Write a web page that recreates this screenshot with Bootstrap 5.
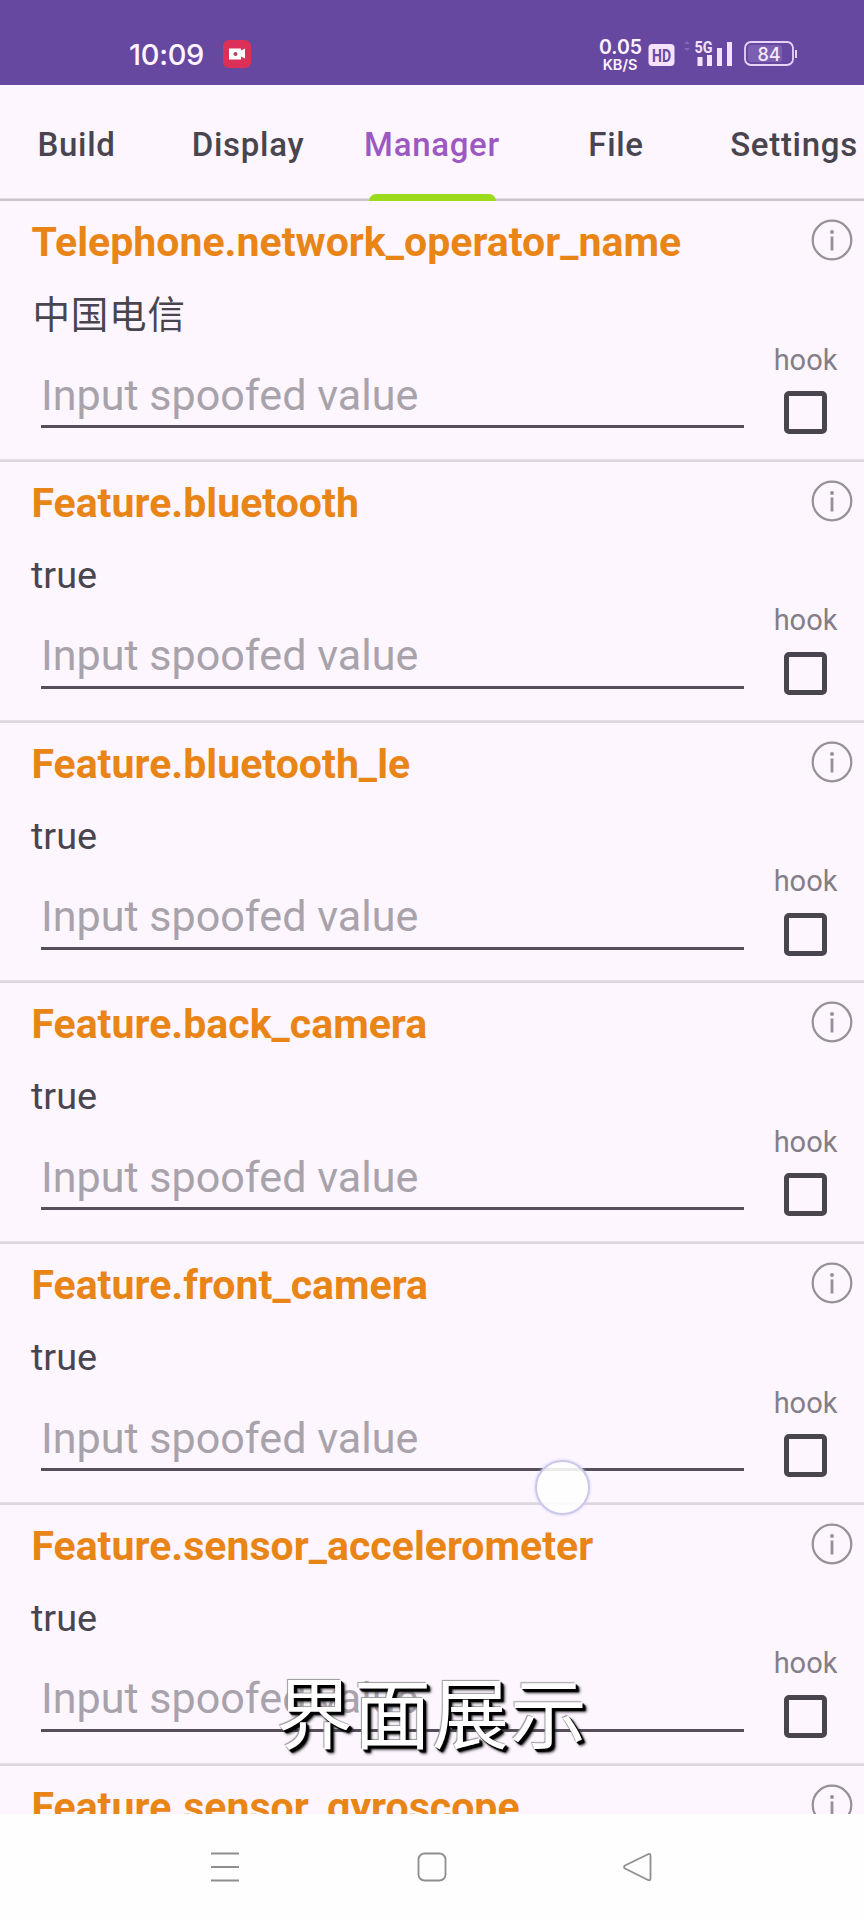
<!DOCTYPE html>
<html lang="en">
<head>
<meta charset="utf-8">
<meta name="viewport" content="width=device-width, initial-scale=1">
<title>Manager</title>
<link href="https://cdn.jsdelivr.net/npm/bootstrap@5.3.0/dist/css/bootstrap.min.css" rel="stylesheet">
<style>
  body { font-family: Roboto, "Noto Sans CJK SC", sans-serif; background: #fdf6ff; color: #49454f; width: 864px; height: 1920px; overflow: hidden; }
  .statusbar { height: 85px; background: #6748a1; color: #fff4ff; padding: 24px 67px 0 129px; }
  .clock { font: 500 29px/62px Inter, sans-serif; letter-spacing: -.3px; width: 93px; }
  .rec { margin-top: 15px; }
  .rate { width: 42px; text-align: center; font: 600 19.5px/19px Inter, sans-serif; padding-top: 14px; white-space: nowrap; }
  .rate small { display: block; font-size: 14.5px; line-height: 15px; }
  .signals { margin-top: 13px; }
  .tabs { height: 116px; box-shadow: inset 0 -2.4px #cbc4cd; flex-wrap: nowrap; overflow: hidden; }
  .tabs .nav-link { color: #49454f; font-weight: 500; font-size: 33px; line-height: 38px; padding: 41px 0 0; letter-spacing: .7px; position: relative; white-space: nowrap; text-align: center; height: 116px; flex: none; width: 192px; }
  .tabs .nav-link:first-child { width: 153px; margin-right: -1px; }
  .tabs .nav-link:last-child { width: 164px; }
  .tabs .nav-link.active { color: #9b59c2; width: 176px; }
  .tabs .active::after { content: ""; position: absolute; left: 25px; bottom: 0; width: 126.5px; height: 7.5px; background: #9cda1c; border-radius: 8px 8px 0 0; }
  .props { height: 1613px; overflow: hidden; }
  .prop { height: 260.75px; box-shadow: inset 0 -2.8px #ddd5df; }
  .prop-main { width: 748px; padding: 17px 0 0 31px; }
  .prop-name { font-weight: 700; font-size: 41px; line-height: 48px; color: #e98516; letter-spacing: .02px; margin: 0 0 26px .4px; white-space: nowrap; }
  .prop-value { font-size: 37.8px; line-height: 44px; height: 44px; margin: 0; }
  .prop-value:lang(zh) { font-family: "Noto Sans CJK SC", sans-serif; font-size: 37.5px; line-height: 40px; letter-spacing: .8px; padding-left: 1.5px; }
  .spoof { margin: 32px 0 0 10px; width: 703px; height: 60px; padding: 2px 0 5px; border: 0; border-bottom: 3px solid #544f5a; border-radius: 0; background: transparent; font-size: 43.1px; line-height: 50px; }
  .spoof::placeholder { color: #a8a2ab; opacity: 1; }
  .prop-side { width: 116px; padding-top: 18px; }
  .info { width: 42px; height: 42px; margin-right: 11.5px; }
  .hook { font-size: 29px; line-height: 34px; margin: 81.5px 1px 0 0; color: #837e88; }
  .hook-box.form-check-input { width: 43px; height: 43px; border: 5px solid #49454f; border-radius: 5px; background: transparent; margin: 14.5px 1px 0 0; }
  .touch { position: absolute; left: 535px; top: 1460px; width: 55px; height: 55px; border-radius: 50%; background: rgba(255,255,255,.88); border: 2px solid #cbc7e8; box-shadow: 0 0 3px #c9c5f0; }
  .caption-over { position: absolute; left: 276px; top: 1660px; font: 400 77px/100px "Noto Sans CJK SC", sans-serif; letter-spacing: 1px; color: #fff; text-shadow: 1px 1px 1px #000, 2px 2px 1px #000, 3px 3px 1px #000, 4px 4px 3px #222, -1px -1px 1px #999; white-space: nowrap; }
  .navkeys { height: 106px; background: #fefefe; padding: 38px 211px 0 210px; }
</style>
</head>
<body class="position-relative">
<header class="statusbar d-flex align-items-start">
  <div class="clock">10:09</div>
  <svg class="rec" width="30" height="30" viewBox="0 0 30 30"><rect x="1" y="1" width="28" height="28" rx="6" fill="#dc3058"/><path d="M7 9.500h12v2l4-2v10l-4-2v3H7z" fill="#fff"/><circle cx="13.500" cy="15" r="2" fill="#b5405c"/></svg>
  <div class="rate ms-auto">0.05<small>KB/S</small></div>
  <svg class="signals" width="156" height="32" viewBox="641 38 156 32"><rect x="648.500" y="45" width="26" height="22" rx="4" fill="#f4e2ff"/><text x="652" y="63" textLength="19" lengthAdjust="spacingAndGlyphs" font-family="Roboto" font-weight="700" font-size="19" fill="#6748a1">HD</text>
    <path d="M684 45l3-3 3 3zM684 49l3 3 3-3z" fill="#8765b9"/>
    <text x="694.500" y="54" font-family="Roboto" font-weight="700" font-size="16" textLength="18" lengthAdjust="spacingAndGlyphs" fill="#f4e2ff">5G</text>
    <path d="M697.500 58h5v9h-5zM707 56h5v11h-5zM717 49h5v18h-5zM727 43h5v24h-5z" fill="#f4e2ff"/>
    <rect x="745" y="43" width="48" height="23" rx="6" fill="none" stroke="#e8d2fa" stroke-width="1.8"/><rect x="748" y="46" width="34" height="17" rx="3" fill="#7c5fb0"/><path d="M796 51v8" stroke="#e8d2fa" stroke-width="2"/>
    <text x="769" y="61.500" text-anchor="middle" font-family="Inter" font-weight="500" font-size="18" fill="#f7eaff">84</text></svg>
</header>
<nav class="tabs nav">
  <a class="nav-link">Build</a>
  <a class="nav-link">Display</a>
  <a class="nav-link active">Manager</a>
  <a class="nav-link">File</a>
  <a class="nav-link">Settings</a>
</nav>
<main class="props" id="props"></main>
<footer class="navkeys d-flex justify-content-between align-items-start">
  <svg width="30" height="30" viewBox="0 0 30 30" stroke="#8e8e8e" stroke-width="2"><path d="M1 1.500h28M1 15h28M1 28.500h28"/></svg>
  <svg width="30" height="30" viewBox="0 0 30 30" fill="none" stroke="#8e8e8e" stroke-width="1.8"><rect x="1.500" y="1.500" width="27" height="27" rx="6"/></svg>
  <svg width="30" height="30" viewBox="0 0 30 30" fill="none" stroke="#8e8e8e" stroke-width="1.8" stroke-linejoin="round"><path d="M2 13.500Q0 15 2 16.500L25 28Q27.500 29 27.500 26V4Q27.500 1 25 2.200Z"/></svg>
</footer>
<div class="touch"></div>
<div class="caption-over" lang="zh">界面展示</div>
<script src="https://cdn.jsdelivr.net/npm/bootstrap@5.3.0/dist/js/bootstrap.bundle.min.js"></script>
<script>
  const properties = [
    ['Telephone.network_operator_name', '中国电信', 'zh'],
    ['Feature.bluetooth', 'true', 'en'],
    ['Feature.bluetooth_le', 'true', 'en'],
    ['Feature.back_camera', 'true', 'en'],
    ['Feature.front_camera', 'true', 'en'],
    ['Feature.sensor_accelerometer', 'true', 'en'],
    ['Feature.sensor_gyroscope', 'true', 'en']
  ];
  document.getElementById('props').innerHTML = properties.map(([name, value, lang]) => `
    <section class="prop d-flex">
      <div class="prop-main">
        <h2 class="prop-name">${name}</h2>
        <p class="prop-value" lang="${lang}">${value}</p>
        <input class="spoof form-control" placeholder="Input spoofed value">
      </div>
      <div class="prop-side d-flex flex-column align-items-center">
        <svg class="info align-self-end flex-shrink-0" viewBox="0 0 42 42"><circle cx="21" cy="21" r="19.3" fill="none" stroke="#969098" stroke-width="2.2"/><circle cx="21" cy="13" r="2" fill="#969098"/><path d="M21 17.500v14" stroke="#969098" stroke-width="2.800"/></svg>
        <label class="hook">hook</label>
        <input class="hook-box form-check-input flex-shrink-0" type="checkbox">
      </div>
    </section>`).join('');
</script>
</body>
</html>
